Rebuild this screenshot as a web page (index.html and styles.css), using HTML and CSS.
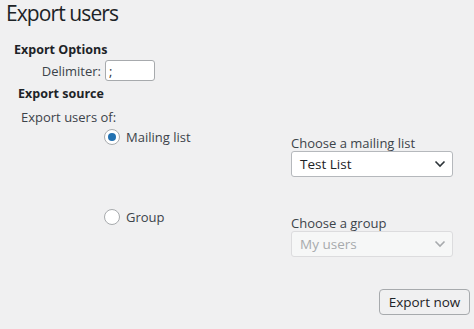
FILE: index.html
```html
<!DOCTYPE html>
<html>
<head>
<meta charset="utf-8">
<link rel="stylesheet" href="styles.css">
</head>
<body>
<div class="page">
  <h1 class="title">Export users</h1>
  <h3 class="section section-options">Export Options</h3>
  <div class="delim-row">
    <label class="delim-label" for="d">Delimiter:</label>
    <input id="d" class="delim-input" type="text" value=";">
  </div>
  <h3 class="section section-source">Export source</h3>
  <div class="users-of">Export users of:</div>
  <div class="source-grid">
    <label class="radio-item">
      <span class="radio checked"></span>
      <span class="radio-text">Mailing list</span>
    </label>
    <div class="choose">
      <div class="choose-label">Choose a mailing list</div>
      <div class="select">
        <span>Test List</span>
        <svg class="chev" width="12" height="8" viewBox="0 0 12 8"><path d="M1.5 1.5 L6 6 L10.5 1.5" fill="none" stroke="#2c3338" stroke-width="1.6"/></svg>
      </div>
    </div>
    <label class="radio-item">
      <span class="radio"></span>
      <span class="radio-text">Group</span>
    </label>
    <div class="choose">
      <div class="choose-label">Choose a group</div>
      <div class="select disabled">
        <span>My users</span>
        <svg class="chev" width="12" height="8" viewBox="0 0 12 8"><path d="M1.5 1.5 L6 6 L10.5 1.5" fill="none" stroke="#a7aaad" stroke-width="1.6"/></svg>
      </div>
    </div>
  </div>
  <div class="actions">
    <button class="btn" type="button">Export now</button>
  </div>
</div>
</body>
</html>
```

FILE: styles.css
```css
html, body {
  margin: 0;
  padding: 0;
  background: #f0f0f1;
}
body {
  font-family: "Open Sans", "Noto Sans", sans-serif;
  color: #3c434a;
  font-size: 13px;
}
.page {
  width: 474px;
  height: 329px;
  overflow: hidden;
}
.title {
  margin: 0;
  padding: 0 0 0 6px;
  font-weight: 400;
  font-size: 21px;
  line-height: 26px;
  color: #1d2327;
  letter-spacing: -0.9px;
}
.section {
  margin: 0;
  font-size: 12.5px;
  font-weight: 700;
  color: #1d2327;
  line-height: 18px;
}
.section-options {
  padding: 15px 0 0 14px;
}
.delim-row {
  display: flex;
  align-items: center;
  padding: 1px 0 0 0;
}
.delim-label {
  width: 105px;
  text-align: right;
  padding-right: 4px;
  box-sizing: border-box;
  font-size: 13px;
}
.delim-input {
  width: 50px;
  height: 21px;
  box-sizing: border-box;
  border: 1px solid #a7aaad;
  border-radius: 3px;
  background: #fff;
  font-family: inherit;
  font-size: 13px;
  padding: 0 3px;
  color: #2c3338;
  outline: none;
}
.section-source {
  padding: 4px 0 0 18px;
}
.users-of {
  padding: 5px 0 0 21px;
  font-size: 13px;
  line-height: 18px;
}
.source-grid {
  display: grid;
  grid-template-columns: 187px 162px;
  grid-auto-rows: 80px;
  padding: 2px 0 0 104px;
}
.radio-item {
  display: flex;
  align-items: flex-start;
  gap: 6px;
  padding-top: 1px;
}
.radio {
  width: 16px;
  height: 16px;
  box-sizing: border-box;
  border-radius: 50%;
  border: 1px solid #a7aaad;
  background: #fff;
  position: relative;
  flex: none;
}
.radio.checked::after {
  content: "";
  position: absolute;
  left: 3px;
  top: 3px;
  width: 8px;
  height: 8px;
  border-radius: 50%;
  background: #2271b1;
}
.radio-text {
  line-height: 16px;
  font-size: 13px;
  color: #3c434a;
}
.choose {
  padding-top: 7px;
}
.choose-label {
  font-size: 13px;
  line-height: 16px;
  color: #3c434a;
}
.select {
  height: 26px;
  box-sizing: border-box;
  border: 1px solid #b5b8bc;
  border-radius: 3px;
  background: #fff;
  display: flex;
  align-items: center;
  justify-content: space-between;
  padding: 0 6px 0 8px;
  font-size: 13.5px;
  color: #1d2327;
}
.select.disabled {
  background: #f6f7f7;
  border-color: #dcdcde;
  color: #a7aaad;
}
.actions {
  display: flex;
  justify-content: flex-end;
  padding: 1px 4px 0 0;
}
.btn {
  width: 91px;
  height: 26px;
  box-sizing: border-box;
  border: 1px solid #a7aaad;
  border-radius: 4px;
  background: #f0f0f1;
  font-family: inherit;
  font-size: 13.5px;
  color: #1d2327;
  padding: 0;
}
```
